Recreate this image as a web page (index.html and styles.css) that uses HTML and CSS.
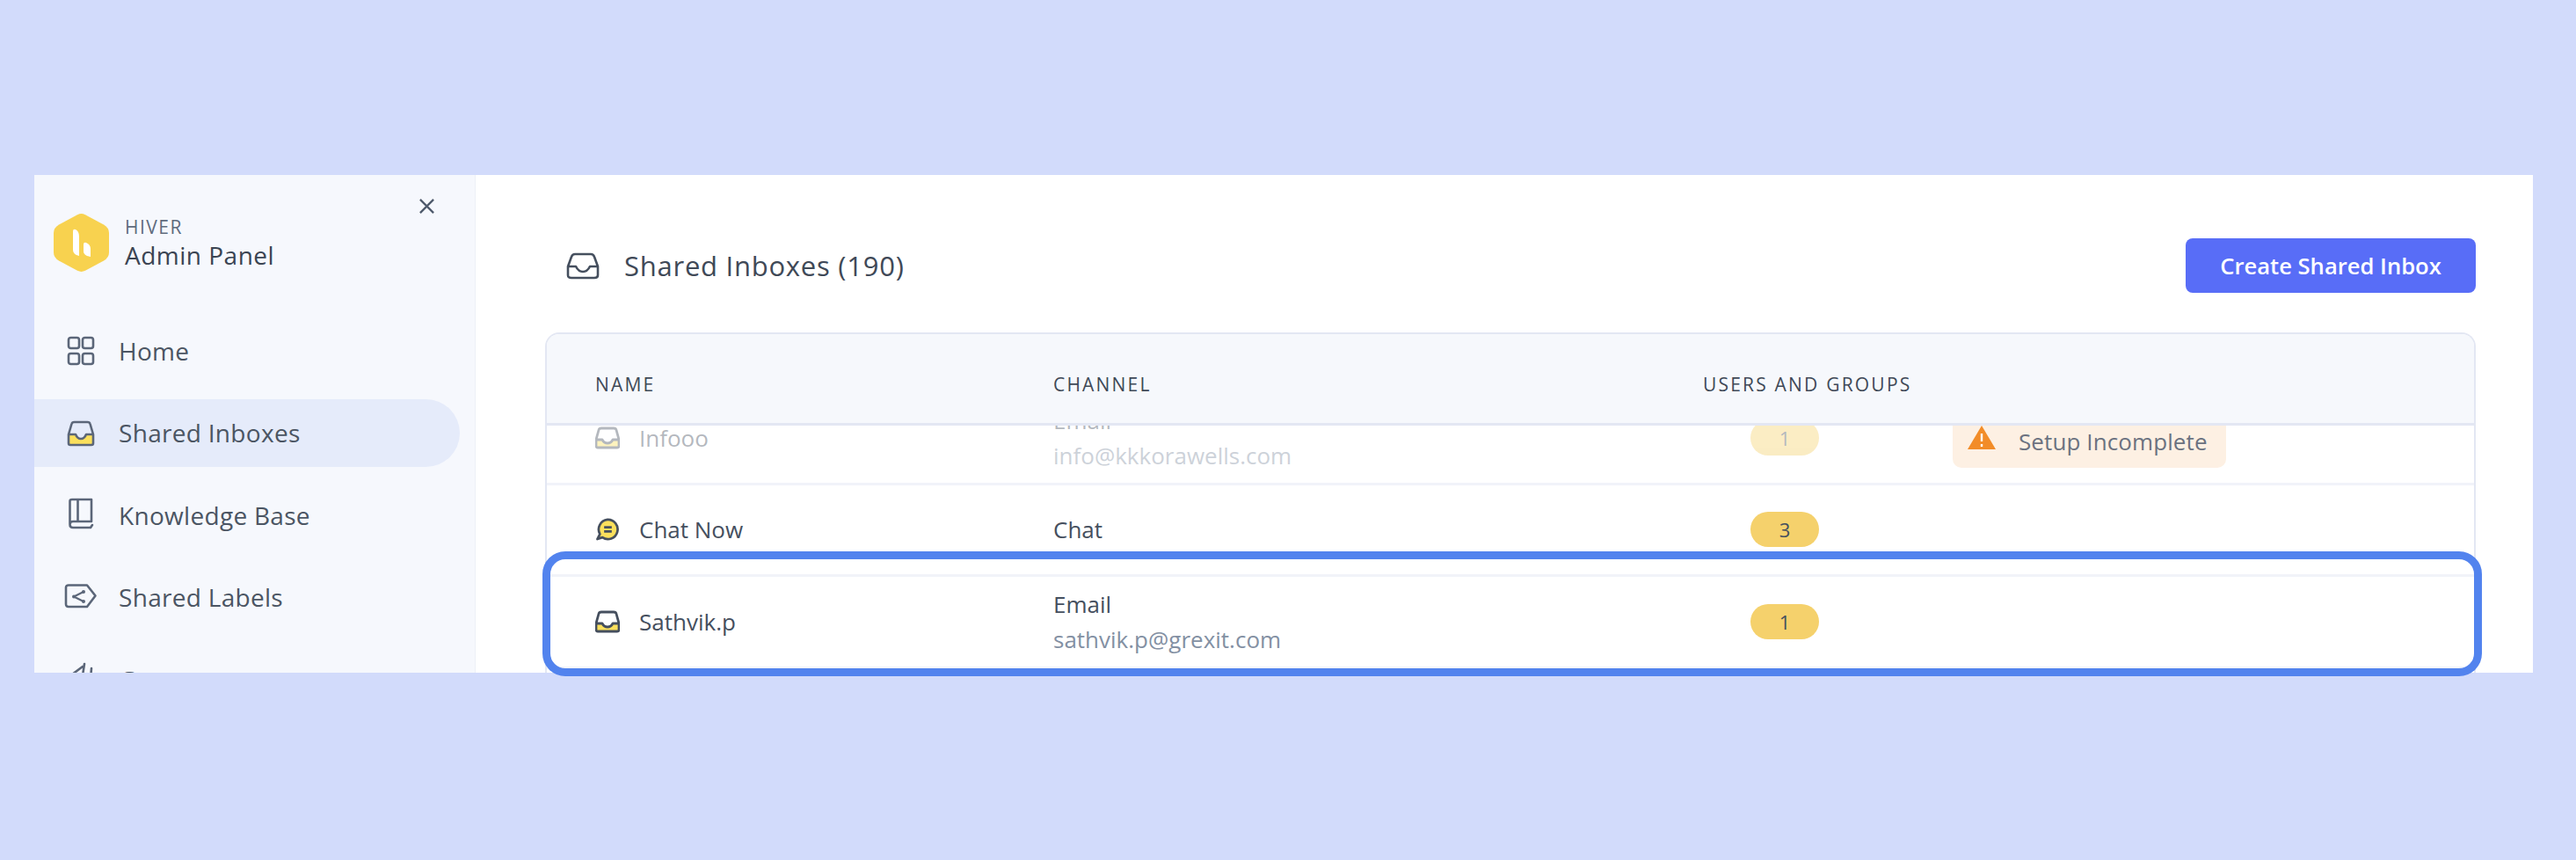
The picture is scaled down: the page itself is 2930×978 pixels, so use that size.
FILE: index.html
```html
<!DOCTYPE html>
<html lang="en">
<head>
<meta charset="utf-8">
<title>Hiver Admin Panel</title>
<link rel="stylesheet" href="styles.css">
</head>
<body>
<div class="frame">
  <div class="card">
    <aside class="sidebar">
      <svg class="close" viewBox="0 0 20 20"><path d="M2 2L18 18M18 2L2 18"/></svg>
      <div class="brand">
        <svg class="logo" viewBox="0 0 63 68"><path d="M27 2.200Q31.500 0 36 2.200L57 13.500Q63 17 63 23V45Q63 51 57 54.500L36 65.800Q31.500 68 27 65.800L6 54.500Q0 51 0 45V23Q0 17 6 13.500Z" fill="#f8d24f"/><path d="M22 21Q22 18 25 19Q29 21 29 27V49L26 48Q22 46 22 42Z M34 36Q34 33 37 34Q42 36 42 41V50L38 49Q34 47 34 44Z" fill="#fff"/></svg>
        <div class="brand-text">
          <div class="brand-top">HIVER</div>
          <div class="brand-name">Admin Panel</div>
        </div>
      </div>
      <nav class="nav">
        <a class="nav-item">
          <svg class="nav-icon" viewBox="0 0 34 34"><g class="st"><rect x="3" y="2" width="12" height="12" rx="2.500"/><rect x="19" y="2" width="12" height="12" rx="2.500"/><rect x="3" y="20" width="12" height="12" rx="2.500"/><rect x="19" y="20" width="12" height="12" rx="2.500"/></g></svg>
          <span>Home</span>
        </a>
        <a class="nav-item active">
          <svg class="nav-icon" viewBox="0 0 34 34"><path d="M3 19H11Q13 24 17 24T23 19H31V29Q31 31 29 31H5Q3 31 3 29Z" fill="#fbe05c"/><path class="st" d="M3 19L6.500 7Q7 5 9.500 5H24.500Q27 5 27.500 7L31 19V29Q31 31 29 31H5Q3 31 3 29ZM3 19H11Q13 24 17 24T23 19H31"/></svg>
          <span>Shared Inboxes</span>
        </a>
        <a class="nav-item">
          <svg class="nav-icon" viewBox="0 0 34 34"><path class="st" d="M4.500 27V1Q4.500 -1 7 -1H29V24H8Q4.500 24 4.500 27.500T8 31H28L30 28M13.500 -1V24"/></svg>
          <span>Knowledge Base</span>
        </a>
        <a class="nav-item">
          <svg class="nav-icon" viewBox="0 0 34 34"><path class="st" d="M0 6Q0 3.500 3 3.500H24L33.500 15.500L24 28H3Q0 28 0 25Z"/><path class="st thin" d="M20 11L9 16.500L20 22"/><circle cx="20" cy="11" r="2" class="dot"/><circle cx="9" cy="16.500" r="2" class="dot"/><circle cx="20" cy="22" r="2" class="dot"/></svg>
          <span>Shared Labels</span>
        </a>
        <a class="nav-item">
          <svg class="nav-icon" viewBox="0 0 34 34"><path class="st" d="M7 11L19 2M21 -1L19 12M29 4L28 16M7 11L12 22"/></svg>
          <span>Groups</span>
        </a>
      </nav>
    </aside>
    <main class="main">
      <header class="top">
        <div class="title">
          <svg class="title-icon" viewBox="0 0 38 31"><path class="st" d="M2 16L6 5Q7 2 10 2H28Q31 2 32 5L36 16V26Q36 29 32 29H6Q2 29 2 26ZM2 16H11Q14 22 19 22T27 16H36"/></svg>
          <h1>Shared Inboxes (190)</h1>
        </div>
        <button class="create">Create Shared Inbox</button>
      </header>
      <section class="table">
        <div class="thead">
          <span class="c-name">NAME</span>
          <span class="c-channel">CHANNEL</span>
          <span class="c-users">USERS AND GROUPS</span>
        </div>
        <div class="tbody">
          <div class="row">
            <div class="c-name faded">
              <svg class="row-icon" viewBox="0 0 28 24"><path d="M1 14H8Q10 17 14 17T20 14H27V21Q27 23 25 23H3Q1 23 1 21Z" fill="#fbe05c"/><path class="st" d="M1 14L4 3Q4.500 1 7 1H21Q23.500 1 24 3L27 14V21Q27 23 25 23H3Q1 23 1 21ZM1 14H8Q10 18 14 18T20 14H27"/></svg>
              <span>Infooo</span>
            </div>
            <div class="c-channel faded">
              <div class="chan">Email</div>
              <div class="addr">info@kkkorawells.com</div>
            </div>
            <div class="c-users faded"><span class="badge">1</span></div>
            <div class="c-status">
              <div class="warn">
                <svg class="warn-icon" viewBox="0 0 32 28"><path d="M16 0L32 27H0Z" fill="#f28c28"/><path d="M16 9V18M16 21V24" stroke="#fff" stroke-width="2.400" fill="none"/></svg>
                <span>Setup Incomplete</span>
              </div>
            </div>
          </div>
          <div class="row">
            <div class="c-name">
              <svg class="row-icon" viewBox="0 0 28 27"><path d="M14 2A11.500 11.500 0 1 1 8 23L2 25L5 19A11.500 11.500 0 0 1 14 2Z" fill="#fbe05c" stroke="#454f5e" stroke-width="2.800" stroke-linejoin="round"/><path d="M10 11H19M10 16H19" stroke="#454f5e" stroke-width="2.800"/></svg>
              <span>Chat Now</span>
            </div>
            <div class="c-channel"><div class="chan">Chat</div></div>
            <div class="c-users"><span class="badge">3</span></div>
          </div>
          <div class="row">
            <div class="c-name">
              <svg class="row-icon" viewBox="0 0 28 24"><path d="M1 14H8Q10 17 14 17T20 14H27V21Q27 23 25 23H3Q1 23 1 21Z" fill="#fbe05c"/><path class="st" d="M1 14L4 3Q4.500 1 7 1H21Q23.500 1 24 3L27 14V21Q27 23 25 23H3Q1 23 1 21ZM1 14H8Q10 18 14 18T20 14H27"/></svg>
              <span>Sathvik.p</span>
            </div>
            <div class="c-channel">
              <div class="chan">Email</div>
              <div class="addr">sathvik.p@grexit.com</div>
            </div>
            <div class="c-users"><span class="badge">1</span></div>
          </div>
        </div>
      </section>
    </main>
  </div>
  <div class="highlight"></div>
</div>
</body>
</html>
```
FILE: styles.css
```css
* { box-sizing: border-box; }
html, body { margin: 0; height: 100%; }
body {
  background: #d2dbfb;
  font-family: "Open Sans", sans-serif;
  color: #454f5e;
  overflow: hidden;
  padding: 199px 49px 0 39px;
}
.frame { position: relative; width: 2842px; height: 566px; }
.card { display: flex; width: 100%; height: 100%; background: #fff; overflow: hidden; }

.st { fill: none; stroke: #5b6679; stroke-width: 2.600; stroke-linejoin: round; stroke-linecap: round; }
.st.thin { stroke-width: 2; }
.dot { fill: #5b6679; }

.sidebar {
  position: relative;
  flex: 0 0 502px;
  height: 100%;
  background: #f6f8fd;
  border-right: 1px solid #edf0f7;
  padding-top: 43px;
  padding-right: 17px;
}
.close { position: absolute; top: 26px; right: 45px; width: 19px; height: 19px; fill: none; stroke: #4e5a6c; stroke-width: 2.400; }
.brand { display: flex; align-items: center; gap: 18px; padding-left: 22px; height: 68px; }
.logo { width: 63px; height: 68px; flex: none; }
.brand-text { display: flex; flex-direction: column; }
.brand-top { font-size: 21px; line-height: 28px; letter-spacing: 1.500px; color: #5f6b7d; }
.brand-name { font-size: 28px; line-height: 36px; letter-spacing: .5px; color: #3b4452; }

.nav { display: flex; flex-direction: column; gap: 16.500px; margin-top: 50px; }
.nav-item {
  display: flex;
  align-items: center;
  gap: 26px;
  height: 77px;
  padding-left: 36px;
  font-size: 28px;
  letter-spacing: .3px;
  color: #4b5563;
  border-radius: 0 39px 39px 0;
}
.nav-item.active { background: #e5ebfa; }
.nav-icon { width: 34px; height: 34px; flex: none; overflow: visible; }

.main { flex: 1; min-width: 0; padding: 72px 65px 0 79px; display: flex; flex-direction: column; }
.top { display: flex; align-items: center; justify-content: space-between; height: 62px; margin-left: 2px; }
.title { display: flex; align-items: center; gap: 28px; margin-left: 22px; }
.title-icon { width: 38px; height: 31px; flex: none; }
.title-icon .st { stroke: #454f5e; }
h1 { margin: 0; font-size: 31px; font-weight: 400; letter-spacing: .75px; color: #3f4957; }
.create {
  width: 330px;
  height: 62px;
  border: 0;
  border-radius: 8px;
  background: #586df7;
  color: #fff;
  font: 600 25.600px "Open Sans", sans-serif;
}

.table {
  width: 2196px;
  margin-top: 45px;
  height: 420px;
  border: 2px solid #e3e7f3;
  border-bottom: 0;
  border-radius: 16px 16px 0 0;
  overflow: hidden;
}
.thead {
  display: flex;
  align-items: center;
  height: 104px;
  padding-top: 12px;
  background: #f6f8fc;
  border-bottom: 3px solid #e3e7f3;
  font-size: 21px;
  letter-spacing: 2.200px;
  color: #3f4957;
  position: relative;
  z-index: 1;
}
.c-name { flex: none; width: 521px; margin-left: 55px; display: flex; align-items: center; gap: 22px; }
.c-channel { flex: none; width: 739px; }
.c-users { flex: none; width: 284px; }
.thead .c-users { width: auto; }
.tbody { margin-top: -37px; }
.row {
  display: flex;
  align-items: center;
  height: 104.500px;
  border-bottom: 3px solid #f1f3f9;
  font-size: 26px;
  color: #454f5e;
}
.row-icon { width: 28px; height: 26px; flex: none; }
.row .st { stroke: #454f5e; stroke-width: 2.800; }
.chan { line-height: 40px; }
.addr { line-height: 40px; color: #8390a3; }
.row .c-users { padding-left: 54px; }
.badge {
  display: flex;
  align-items: center;
  justify-content: center;
  width: 78px;
  height: 40px;
  border-radius: 20px;
  background: #f5d16c;
  font-size: 22px;
  color: #454f5e;
}
.faded { opacity: .4; }
.c-status { margin-top: 8px; }
.warn {
  display: flex;
  align-items: center;
  gap: 26px;
  width: 311px;
  height: 60px;
  padding-left: 17px;
  background: #fdf0e3;
  border-radius: 10px;
  color: #6b7280;
  font-size: 26px;
  letter-spacing: .1px;
}
.warn-icon { width: 32px; height: 28px; flex: none; margin-top: -8px; }

.highlight {
  position: absolute;
  left: 578px;
  top: 428px;
  width: 2206px;
  height: 142px;
  border: 9px solid #5283ee;
  border-radius: 26px;
}
```
